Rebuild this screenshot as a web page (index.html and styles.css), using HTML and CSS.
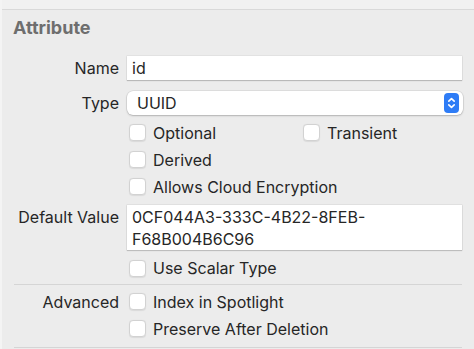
FILE: index.html
```html
<!DOCTYPE html>
<html lang="en">
<head>
    <meta charset="UTF-8">
    <meta name="viewport" content="width=device-width, initial-scale=1.0">
    <title>Attribute Inspector</title>
    <link rel="stylesheet" href="styles.css">
</head>
<body>

<div class="inspector">
    <div class="topbar"></div>
    <h2 class="section-title">Attribute</h2>

    <div class="row row-name">
        <span class="label">Name</span>
        <div class="text-field">id</div>
    </div>

    <div class="row row-type">
        <span class="label">Type</span>
        <div class="popup">
            <span>UUID</span>
            <span class="stepper">
                <svg width="15" height="20" viewBox="0 0 15 20">
                    <path d="M4.8 8.2 L7.5 5.6 L10.2 8.2 M4.8 11.8 L7.5 14.4 L10.2 11.8" fill="none" stroke="#fff" stroke-width="1.6" stroke-linecap="round" stroke-linejoin="round"/>
                </svg>
            </span>
        </div>
    </div>

    <div class="row row-check first-check">
        <span class="label"></span>
        <div class="check-pair">
            <div class="check"><span class="box"></span>Optional</div>
            <div class="check"><span class="box"></span>Transient</div>
        </div>
    </div>
    <div class="row row-check">
        <span class="label"></span>
        <div class="check"><span class="box"></span>Derived</div>
    </div>
    <div class="row row-check">
        <span class="label"></span>
        <div class="check"><span class="box"></span>Allows Cloud Encryption</div>
    </div>

    <div class="row row-default">
        <span class="label">Default Value</span>
        <div class="text-area">0CF044A3-333C-4B22-8FEB-<br>F68B004B6C96</div>
    </div>

    <div class="row row-check scalar">
        <span class="label"></span>
        <div class="check"><span class="box"></span>Use Scalar Type</div>
    </div>

    <div class="separator"></div>

    <div class="row row-check advanced">
        <span class="label">Advanced</span>
        <div class="check"><span class="box"></span>Index in Spotlight</div>
    </div>
    <div class="row row-check">
        <span class="label"></span>
        <div class="check"><span class="box"></span>Preserve After Deletion</div>
    </div>

    <div class="separator last"></div>
</div>

</body>
</html>
```

FILE: styles.css
```css
body {
    margin: 0;
    background-color: #ececec;
    font-family: "Inter", "Noto Sans", sans-serif;
    font-size: 16px;
    color: #262626;
}
.inspector {
    width: 474px;
    height: 349px;
    background-color: #ececec;
    border-left: 2px solid #f4f4f4;
    box-sizing: border-box;
    overflow: hidden;
}
.topbar {
    height: 9px;
    background-color: #f1f1f1;
    border-bottom: 1px solid #d9d9d9;
}
.section-title {
    margin: 6px 0 0 11px;
    font-size: 18px;
    line-height: 24px;
    font-weight: 700;
    color: #6e6e6e;
}
.row {
    display: grid;
    grid-template-columns: 117px 1fr;
    column-gap: 8px;
    align-items: center;
    margin-right: 12px;
}
.label {
    text-align: right;
    white-space: nowrap;
}
.row-name {
    margin-top: 16px;
}
.text-field {
    height: 24px;
    line-height: 24px;
    padding-left: 5px;
    background-color: #fff;
    box-shadow: 0 0 0 0.5px rgba(0, 0, 0, 0.08), 0 1px 1px rgba(0, 0, 0, 0.18);
}
.row-type {
    margin-top: 11px;
}
.popup {
    height: 24px;
    display: flex;
    align-items: center;
    justify-content: space-between;
    padding: 0 3px 0 10px;
    margin-right: -1px;
    background-color: #fff;
    border-radius: 6px;
    box-shadow: 0 0 0 0.5px rgba(0, 0, 0, 0.12), 0 1px 2px rgba(0, 0, 0, 0.2);
}
.stepper {
    display: flex;
    width: 15px;
    height: 20px;
    border-radius: 4px;
    background-color: #2e7cf6;
    margin-right: 1px;
}
.row-check {
    height: 27px;
}
.first-check {
    margin-top: 4px;
}
.check-pair {
    display: grid;
    grid-template-columns: 174px 1fr;
}
.check {
    display: flex;
    align-items: center;
    white-space: nowrap;
}
.box {
    width: 15px;
    height: 15px;
    margin-left: 2px;
    margin-right: 7px;
    border-radius: 4px;
    background-color: #fff;
    border: 1px solid #d2d2d2;
    box-shadow: 0 0.5px 1px rgba(0, 0, 0, 0.08);
}
.row-default {
    margin-top: 5px;
    align-items: start;
}
.row-default .label {
    padding-top: 1px;
    line-height: 23px;
}
.text-area {
    height: 45px;
    padding: 1px 0 0 5px;
    box-sizing: border-box;
    line-height: 22px;
    background-color: #fff;
    box-shadow: 0 0 0 0.5px rgba(0, 0, 0, 0.1), 0 1px 1px rgba(0, 0, 0, 0.15);
}
.scalar {
    margin-top: 5px;
    height: 26px;
}
.separator {
    height: 1px;
    margin: 3px 12px 0 12px;
    background-color: #d5d5d5;
}
.separator.last {
    margin-top: 5px;
}
.advanced {
    margin-top: 3px;
}
```
